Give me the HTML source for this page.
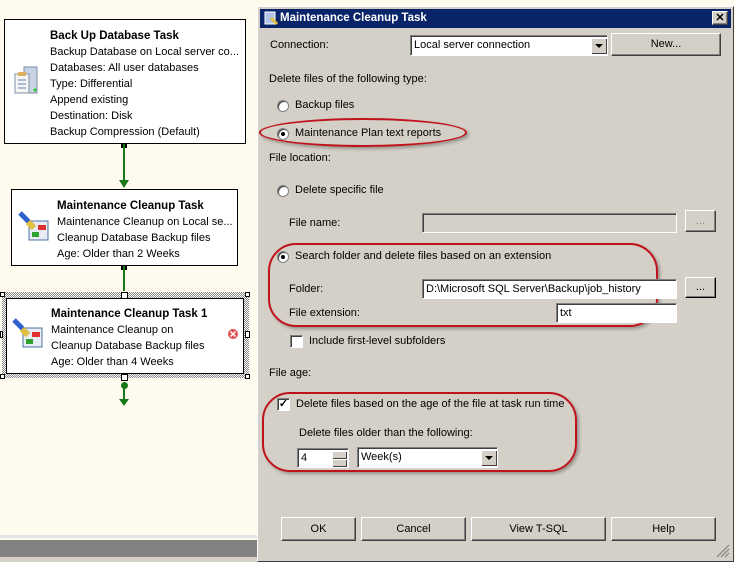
<!DOCTYPE html>
<html><head><style>
*{margin:0;padding:0;box-sizing:border-box}
body{width:735px;height:562px;overflow:hidden;background:#fefaee;font-family:"Liberation Sans",sans-serif;font-size:11px;color:#000;position:relative}
.a{position:absolute;white-space:nowrap}
.box{position:absolute;background:#fff;border:1px solid #000}
.t{position:absolute;line-height:16px}
.b{font-weight:bold;font-size:11.5px}
.dlg{position:absolute;left:257px;top:6px;width:477px;height:556px;background:#d4d0c8;border:1px solid;border-color:#fff #404040 #404040 #fff}
.tb{position:absolute;left:2px;top:2px;right:2px;height:19px;background:#0a246a;color:#fff;font-weight:bold;font-size:11.5px;line-height:19px;padding-left:20px}
.in{position:absolute;background:#fff;border:1px solid;border-color:#808080 #fff #fff #808080;box-shadow:inset 1px 1px 0 #404040;padding-left:3px;line-height:19px}
.btn{position:absolute;background:#d4d0c8;border:1px solid;border-color:#fff #404040 #404040 #fff;box-shadow:inset -1px -1px 0 #808080;text-align:center}
.rad{position:absolute;width:12px;height:12px;border-radius:50%;background:#fff;border:1px solid #808080;box-shadow:inset 1px 1px 0 #404040}
.rad.on::after{content:"";position:absolute;left:3px;top:3px;width:4px;height:4px;border-radius:50%;background:#000}
.chk{position:absolute;width:13px;height:13px;background:#fff;border:1px solid;border-color:#808080 #fff #fff #808080;box-shadow:inset 1px 1px 0 #404040;font-size:11px;line-height:11px;text-align:center;font-weight:bold}
.ell{position:absolute;border:2px solid #c0121a;border-radius:50%/50%;box-shadow:2px 2px 3px rgba(0,0,0,.3)}
.arr{position:absolute;width:13px;height:11px;background:#d4d0c8;border-left:1px solid #fff;border-top:1px solid #fff;box-shadow:1px 1px 0 #404040}
</style></head><body>
<div class="box" style="left:4px;top:19px;width:242px;height:125px">
 <div class="t b" style="left:45px;top:8px">Back Up Database Task</div>
 <div class="t" style="left:45px;top:24px">Backup Database on Local server co...</div>
 <div class="t" style="left:45px;top:40px">Databases: All user databases</div>
 <div class="t" style="left:45px;top:56px">Type: Differential</div>
 <div class="t" style="left:45px;top:72px">Append existing</div>
 <div class="t" style="left:45px;top:88px">Destination: Disk</div>
 <div class="t" style="left:45px;top:104px">Backup Compression (Default)</div>
 <svg style="position:absolute;left:7px;top:45px" width="30" height="30"><rect x="12" y="2" width="13" height="26" fill="#c8d4e4" stroke="#7d8ca4"/><rect x="3" y="9" width="14" height="19" fill="#f4f4f4" stroke="#8090a8"/><rect x="6" y="7" width="8" height="4" fill="#e0b060"/><path d="M6 15h8M6 19h8M6 23h8" stroke="#6080b0"/><circle cx="23" cy="25" r="1.5" fill="#2c2"/></svg>
</div>
<div class="a" style="left:121px;top:144px;width:6px;height:4px;background:#000"></div>
<div class="a" style="left:123px;top:144px;width:2px;height:37px;background:#187818"></div>
<div class="a" style="left:119px;top:180px;width:0;height:0;border-left:5px solid transparent;border-right:5px solid transparent;border-top:8px solid #187818"></div>
<div class="box" style="left:11px;top:189px;width:227px;height:77px">
 <div class="t b" style="left:45px;top:8px">Maintenance Cleanup Task</div>
 <div class="t" style="left:45px;top:24px">Maintenance Cleanup on Local se...</div>
 <div class="t" style="left:45px;top:40px">Cleanup Database Backup files</div>
 <div class="t" style="left:45px;top:56px">Age: Older than 2 Weeks</div>
 <svg style="position:absolute;left:6px;top:20px" width="32" height="32"><rect x="11" y="11" width="19" height="19" fill="#e8ecf4" stroke="#5070a0"/><rect x="20" y="15" width="8" height="5" fill="#e03030"/><rect x="14" y="22" width="7" height="5" fill="#30a030"/><path d="M2 3l10 10" stroke="#3060d0" stroke-width="5"/><path d="M10 12l6 6" stroke="#e0c040" stroke-width="6"/></svg>
</div>
<div class="a" style="left:121px;top:266px;width:6px;height:4px;background:#000"></div>
<div class="a" style="left:123px;top:266px;width:2px;height:25px;background:#187818"></div>
<div class="a" style="left:2px;top:292px;width:247px;height:86px;background:repeating-conic-gradient(#888 0 25%,#fff 0 50%) 0 0/2px 2px"></div>
<div class="box" style="left:6px;top:298px;width:238px;height:76px">
 <div class="t b" style="left:44px;top:7px">Maintenance Cleanup Task 1</div>
 <div class="t" style="left:44px;top:23px">Maintenance Cleanup on</div>
 <div class="t" style="left:44px;top:39px">Cleanup Database Backup files</div>
 <div class="t" style="left:44px;top:55px">Age: Older than 4 Weeks</div>
 <svg style="position:absolute;left:5px;top:18px" width="32" height="32"><rect x="11" y="11" width="19" height="19" fill="#e8ecf4" stroke="#5070a0"/><rect x="20" y="15" width="8" height="5" fill="#e03030"/><rect x="14" y="22" width="7" height="5" fill="#30a030"/><path d="M2 3l10 10" stroke="#3060d0" stroke-width="5"/><path d="M10 12l6 6" stroke="#e0c040" stroke-width="6"/></svg>
 <svg style="position:absolute;left:220px;top:29px" width="12" height="12"><circle cx="6" cy="6" r="5" fill="#e05050"/><path d="M3.5 3.5l5 5M8.5 3.5l-5 5" stroke="#fff" stroke-width="1.5"/></svg>
</div>
<div class="a" style="left:0;top:292px;width:5px;height:5px;background:#fff;border:1px solid #000"></div>
<div class="a" style="left:121px;top:292px;width:7px;height:7px;background:#fff;border:1px solid #000"></div>
<div class="a" style="left:245px;top:292px;width:5px;height:5px;background:#fff;border:1px solid #000"></div>
<div class="a" style="left:245px;top:331px;width:5px;height:7px;background:#fff;border:1px solid #000"></div>
<div class="a" style="left:0;top:331px;width:3px;height:7px;background:#fff;border:1px solid #000"></div>
<div class="a" style="left:0;top:374px;width:5px;height:5px;background:#fff;border:1px solid #000"></div>
<div class="a" style="left:121px;top:374px;width:7px;height:7px;background:#fff;border:1px solid #000"></div>
<div class="a" style="left:245px;top:374px;width:5px;height:5px;background:#fff;border:1px solid #000"></div>
<div class="a" style="left:121px;top:382px;width:7px;height:7px;border-radius:50%;background:#187818"></div>
<div class="a" style="left:123px;top:386px;width:2px;height:15px;background:#187818"></div>
<div class="a" style="left:119px;top:399px;width:0;height:0;border-left:5px solid transparent;border-right:5px solid transparent;border-top:7px solid #187818"></div>
<div class="a" style="left:0;top:535px;width:257px;height:3px;background:#e4e4e4"></div>
<div class="a" style="left:0;top:540px;width:257px;height:17px;background:#828282"></div>
<div class="a" style="left:0;top:557px;width:257px;height:5px;background:#d4d0c8"></div>
<div class="dlg">
 <div class="tb">Maintenance Cleanup Task
  <svg style="position:absolute;left:3px;top:1px" width="16" height="16"><rect x="2" y="2" width="10" height="12" fill="#b0c4e8" stroke="#fff"/><path d="M8 8l6 6" stroke="#e0c040" stroke-width="3"/></svg>
  <div class="btn" style="left:452px;top:2px;width:16px;height:14px;color:#000;font-size:11px;line-height:12px">✕</div>
 </div>
</div>
<div class="a" style="left:270px;top:39px">Connection:</div>
<div class="in" style="left:410px;top:35px;width:198px;height:21px">Local server connection</div>
<div class="arr" style="left:591px;top:38px;width:15px;height:15px"><div class="a" style="left:3px;top:5px;border-left:4px solid transparent;border-right:4px solid transparent;border-top:4px solid #000"></div></div>
<div class="btn" style="left:611px;top:33px;width:110px;height:23px;line-height:21px">New...</div>
<div class="a" style="left:269px;top:73px">Delete files of the following type:</div>
<div class="rad" style="left:277px;top:100px"></div><div class="a" style="left:295px;top:99px">Backup files</div>
<div class="rad on" style="left:277px;top:128px"></div><div class="a" style="left:295px;top:127px">Maintenance Plan text reports</div>
<div class="ell" style="left:259px;top:118px;width:208px;height:29px"></div>
<div class="a" style="left:269px;top:152px">File location:</div>
<div class="rad" style="left:277px;top:185px"></div><div class="a" style="left:295px;top:184px">Delete specific file</div>
<div class="a" style="left:289px;top:217px">File name:</div>
<div class="in" style="left:422px;top:213px;width:255px;height:20px;background:#d4d0c8"></div>
<div class="btn" style="left:685px;top:210px;width:31px;height:22px;line-height:20px;color:#808080">...</div>
<div class="rad on" style="left:277px;top:251px"></div><div class="a" style="left:295px;top:250px">Search folder and delete files based on an extension</div>
<div class="ell" style="left:268px;top:243px;width:390px;height:84px;border-radius:28px"></div>
<div class="a" style="left:289px;top:283px">Folder:</div>
<div class="in" style="left:422px;top:279px;width:255px;height:20px">D:\Microsoft SQL Server\Backup\job_history</div>
<div class="btn" style="left:685px;top:277px;width:31px;height:21px;line-height:19px;border-color:#fff #000 #000 #fff">...</div>
<div class="a" style="left:289px;top:307px">File extension:</div>
<div class="in" style="left:556px;top:303px;width:121px;height:20px">txt</div>
<div class="chk" style="left:290px;top:335px"></div><div class="a" style="left:309px;top:335px">Include first-level subfolders</div>
<div class="a" style="left:269px;top:367px">File age:</div>
<div class="chk" style="left:277px;top:398px">✓</div><div class="a" style="left:296px;top:398px">Delete files based on the age of the file at task run time</div>
<div class="ell" style="left:262px;top:392px;width:315px;height:80px;border-radius:28px"></div>
<div class="a" style="left:299px;top:427px">Delete files older than the following:</div>
<div class="in" style="left:297px;top:448px;width:52px;height:20px">4</div>
<div class="arr" style="left:332px;top:451px;width:14px;height:7px"></div>
<div class="arr" style="left:332px;top:459px;width:14px;height:7px"></div>
<div class="in" style="left:357px;top:447px;width:141px;height:21px">Week(s)</div>
<div class="arr" style="left:481px;top:450px;width:15px;height:15px"><div class="a" style="left:3px;top:5px;border-left:4px solid transparent;border-right:4px solid transparent;border-top:4px solid #000"></div></div>
<div class="btn" style="left:281px;top:517px;width:75px;height:24px;line-height:22px">OK</div>
<div class="btn" style="left:361px;top:517px;width:105px;height:24px;line-height:22px">Cancel</div>
<div class="btn" style="left:471px;top:517px;width:135px;height:24px;line-height:22px">View T-SQL</div>
<div class="btn" style="left:611px;top:517px;width:105px;height:24px;line-height:22px">Help</div>
<svg class="a" style="left:716px;top:544px" width="14" height="14"><path d="M13 1L1 13M13 5L5 13M13 9L9 13" stroke="#808080" stroke-width="1.2"/></svg>
</body></html>
